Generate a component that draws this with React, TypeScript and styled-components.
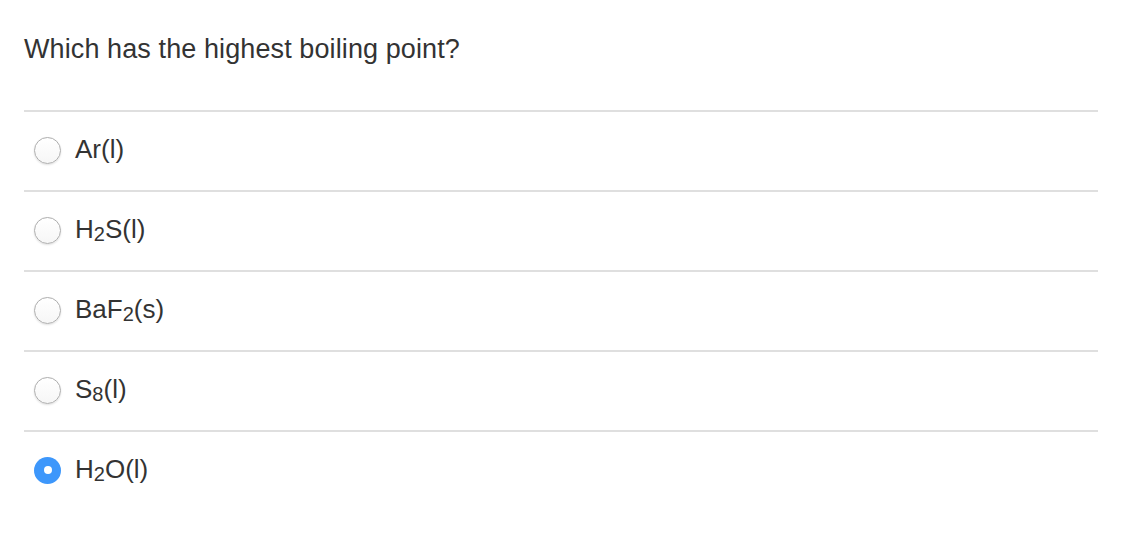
import React, { useState } from 'react';
import styled, { createGlobalStyle } from 'styled-components';

const GlobalStyle = createGlobalStyle`
  html, body {
    margin: 0;
    padding: 0;
    background: #fff;
  }
  body {
    font-family: "Liberation Sans", Arial, Helvetica, sans-serif;
    color: #333;
  }
`;

const Page = styled.div`
  padding: 28px 24px 0 24px;
  width: 1074px;
`;

const Question = styled.h1`
  margin: 0;
  font-size: 27px;
  font-weight: 400;
  line-height: 42px;
  color: #333;
  letter-spacing: 0.1px;
`;

const OptionList = styled.div`
  margin-top: 40px;
  display: flex;
  flex-direction: column;
`;

const OptionRow = styled.label`
  display: flex;
  align-items: center;
  gap: 14px;
  height: 78px;
  padding-left: 10px;
  border-top: 2px solid #dfdfdf;
  cursor: pointer;
`;

const RadioCircle = styled.span<{ $checked: boolean }>`
  flex: none;
  box-sizing: border-box;
  width: 27px;
  height: 27px;
  margin-top: -2px;
  border-radius: 50%;
  display: flex;
  align-items: center;
  justify-content: center;
  background: ${({ $checked }) =>
    $checked ? '#3d97fb' : 'linear-gradient(#ffffff, #f6f6f6)'};
  border: ${({ $checked }) => ($checked ? 'none' : '1px solid #adadad')};
  box-shadow: ${({ $checked }) =>
    $checked ? 'none' : '0 1px 2px rgba(0,0,0,0.12)'};
`;

const RadioDot = styled.span`
  width: 8px;
  height: 8px;
  border-radius: 50%;
  background: #fff;
`;

const OptionText = styled.span`
  font-size: 26px;
  color: #333;
  margin-top: -3px;

  sub {
    font-size: 20px;
    vertical-align: -3px;
    line-height: 0;
  }
`;

const options: React.ReactNode[] = [
  <>Ar(l)</>,
  <>H<sub>2</sub>S(l)</>,
  <>BaF<sub>2</sub>(s)</>,
  <>S<sub>8</sub>(l)</>,
  <>H<sub>2</sub>O(l)</>,
];

export default function App() {
  const [selected, setSelected] = useState(4);

  return (
    <>
      <GlobalStyle />
      <Page>
        <Question>Which has the highest boiling point?</Question>
        <OptionList>
          {options.map((opt, i) => (
            <OptionRow key={i} onClick={() => setSelected(i)}>
              <RadioCircle $checked={selected === i}>
                {selected === i && <RadioDot />}
              </RadioCircle>
              <OptionText>{opt}</OptionText>
            </OptionRow>
          ))}
        </OptionList>
      </Page>
    </>
  );
}
